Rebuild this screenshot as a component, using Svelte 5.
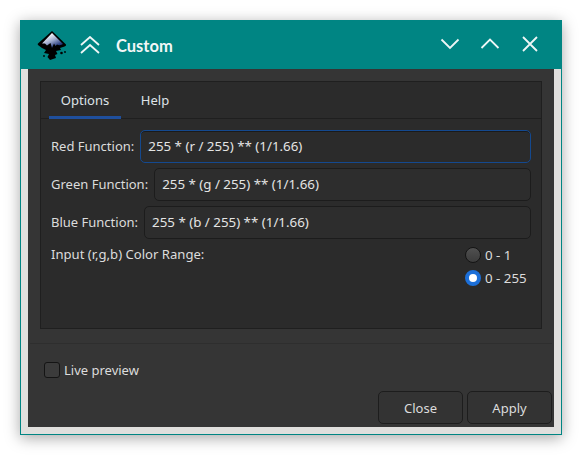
<script>
  const fields = [
    { label: 'Red Function:', value: '255 * (r / 255) ** (1/1.66)', focused: true },
    { label: 'Green Function:', value: '255 * (g / 255) ** (1/1.66)' },
    { label: 'Blue Function:', value: '255 * (b / 255) ** (1/1.66)' }
  ];
</script>

<div class="page">
  <div class="window">
    <header class="titlebar">
      <svg class="logo" width="32" height="32" viewBox="0 0 32 32">
        <defs>
          <linearGradient id="cap" x1="0.3" y1="0.1" x2="0.8" y2="0.8">
            <stop offset="0" stop-color="#ffffff" />
            <stop offset="0.5" stop-color="#a3aed0" />
            <stop offset="1" stop-color="#24397c" />
          </linearGradient>
        </defs>
        <path d="M16 2 L30 15.5 Q30.500 17 28.500 17.500 L24 19 L25 21 L20 22 L21.500 25 L19 26 L20 29 L14 31 L11.500 28 L13 25 L8 24 L10 21 L6 19 L2 16 Q1 15 2.500 14 Z" fill="#000" />
        <path d="M16 4 L27 15 Q24 17 21 15.500 L19.500 17 L18 14.500 L16 19 L14.500 14 L11 16.500 L9 14.500 L6 14.500 Z" fill="url(#cap)" />
        <circle cx="25.500" cy="24" r="1.300" fill="#000" />
        <circle cx="29" cy="23" r="0.900" fill="#000" />
        <circle cx="8" cy="27" r="0.900" fill="#000" />
      </svg>
      <svg class="shade" width="20" height="18" viewBox="0 0 20 18">
        <path d="M1 9 L10 1 L19 9 M1 17 L10 9 L19 17" />
      </svg>
      <span class="title">Custom</span>
      <div class="controls">
        <svg width="20" height="14" viewBox="0 0 20 14"><path d="M1.500 2.500 L10 11 L18.500 2.500" /></svg>
        <svg width="20" height="14" viewBox="0 0 20 14"><path d="M1.500 11 L10 2.500 L18.500 11" /></svg>
        <svg class="close" width="16" height="16" viewBox="0 0 16 16"><path d="M1 1 L15 15 M15 1 L1 15" /></svg>
      </div>
    </header>

    <div class="body">
      <section class="notebook">
        <nav class="tabs">
          <div class="tab active">Options</div>
          <div class="tab">Help</div>
        </nav>
        <div class="panel">
          {#each fields as field}
            <div class="row">
              <span class="label">{field.label}</span>
              <div class="entry" class:focused={field.focused}>{field.value}</div>
            </div>
          {/each}
          <div class="range">
            <span class="label">Input (r,g,b) Color Range:</span>
            <div class="radios">
              <div class="option"><span class="radio"></span>0 - 1</div>
              <div class="option"><span class="radio on"></span>0 - 255</div>
            </div>
          </div>
        </div>
      </section>

      <div class="separator"></div>

      <div class="preview">
        <span class="check"></span>Live preview
      </div>

      <footer class="actions">
        <div class="button">Close</div>
        <div class="button">Apply</div>
      </footer>
    </div>
  </div>
</div>

<style>
  :global(body) {
    margin: 0;
    background: #fff;
    font-family: "Noto Sans", sans-serif;
    font-size: 13px;
  }

  .page {
    padding: 20px;
    height: 415px;
  }

  .window {
    width: 542px;
    height: 415px;
    box-sizing: border-box;
    border: 1px solid #008583;
    background: #e0dfdd;
    box-shadow: 0 3px 14px rgba(0, 0, 0, 0.35);
    display: flex;
    flex-direction: column;
  }

  .titlebar {
    height: 48px;
    flex: none;
    background: #008583;
    display: flex;
    align-items: center;
    padding: 0 23px 0 15px;
    color: #f2f7f7;
  }

  .logo {
    margin-right: 12px;
  }

  .shade {
    margin-right: 16px;
  }

  svg path {
    fill: none;
  }

  .shade path,
  .controls path {
    stroke: #eef6f6;
    stroke-width: 1.8;
  }

  .logo path {
    fill: #000;
  }

  .logo path + path {
    fill: url(#cap);
  }

  .title {
    font-family: Lato, sans-serif;
    font-weight: 700;
    font-size: 16.5px;
    padding-top: 1px;
  }

  .controls {
    margin-left: auto;
    display: flex;
    align-items: center;
    gap: 20px;
    padding-bottom: 2px;
  }

  .close {
    margin-left: 2px;
  }

  .body {
    flex: 1;
    margin: 0 7px 7px 7px;
    background: #353535;
    color: #dcdcdc;
    padding: 12px 2px 3px 2px;
    display: flex;
    flex-direction: column;
  }

  .notebook {
    margin: 0 10px;
    height: 248px;
    box-sizing: border-box;
    border: 1px solid #1f1f1f;
    background: #2b2b2b;
  }

  .tabs {
    display: flex;
    height: 37px;
    box-sizing: border-box;
    border-bottom: 1px solid #1f1f1f;
    padding-left: 8px;
    gap: 9px;
  }

  .tab {
    width: 72px;
    box-sizing: border-box;
    display: flex;
    align-items: center;
    justify-content: center;
    padding-bottom: 1px;
    height: 37px;
    color: #dfe3e8;
  }

  .tab + .tab {
    width: 50px;
  }

  .tab.active {
    border-bottom: 3px solid #1f4f9c;
    padding-top: 2px;
  }

  .panel {
    padding: 11px 10px 0 10px;
    display: flex;
    flex-direction: column;
    gap: 5px;
  }

  .row {
    display: flex;
    align-items: center;
    gap: 5.500px;
  }

  .label {
    white-space: nowrap;
    padding-bottom: 2px;
  }

  .range .label {
    font-size: 13.1px;
  }

  .entry {
    flex: 1;
    height: 33px;
    box-sizing: border-box;
    border: 1px solid #1c1c1c;
    border-radius: 5px;
    background: #2d2d2d;
    padding: 0 7px 2px 7.500px;
    display: flex;
    align-items: center;
    color: #e4e4e4;
    font-size: 13.33px;
  }

  .entry.focused {
    border-color: #14498f;
    background: #2b2b2b;
    box-shadow: inset 0 1px 0 #1a1a1a;
  }

  .range {
    display: flex;
    justify-content: space-between;
    padding-top: 1px;
  }

  .radios {
    display: flex;
    flex-direction: column;
    gap: 5px;
    padding-right: 4px;
    padding-top: 1px;
  }

  .option {
    display: flex;
    align-items: center;
    gap: 4px;
    height: 18px;
    width: 62px;
    margin-left: -1px;
    font-size: 13.33px;
  }

  .radio {
    width: 16px;
    height: 16px;
    box-sizing: border-box;
    border-radius: 50%;
    border: 1px solid #141414;
    background: linear-gradient(#505050, #3c3c3c);
  }

  .radio.on {
    border: 4.500px solid #1c6fd8;
    background: #fff;
  }

  .separator {
    margin-top: 14px;
    height: 1px;
    background: #2e2e2e;
  }

  .preview {
    margin: 17px 0 0 14px;
    display: flex;
    align-items: center;
    gap: 4px;
    height: 18px;
  }

  .check {
    width: 16px;
    height: 16px;
    box-sizing: border-box;
    border: 1px solid #141414;
    border-radius: 3px;
    background: #3b3b3b;
  }

  .actions {
    margin-top: auto;
    display: flex;
    justify-content: flex-end;
    gap: 4px;
  }

  .button {
    width: 85px;
    height: 33px;
    box-sizing: border-box;
    border: 1px solid #1d1d1d;
    border-radius: 5px;
    background: #333333;
    display: flex;
    align-items: center;
    justify-content: center;
    color: #dcdcdc;
  }
</style>
